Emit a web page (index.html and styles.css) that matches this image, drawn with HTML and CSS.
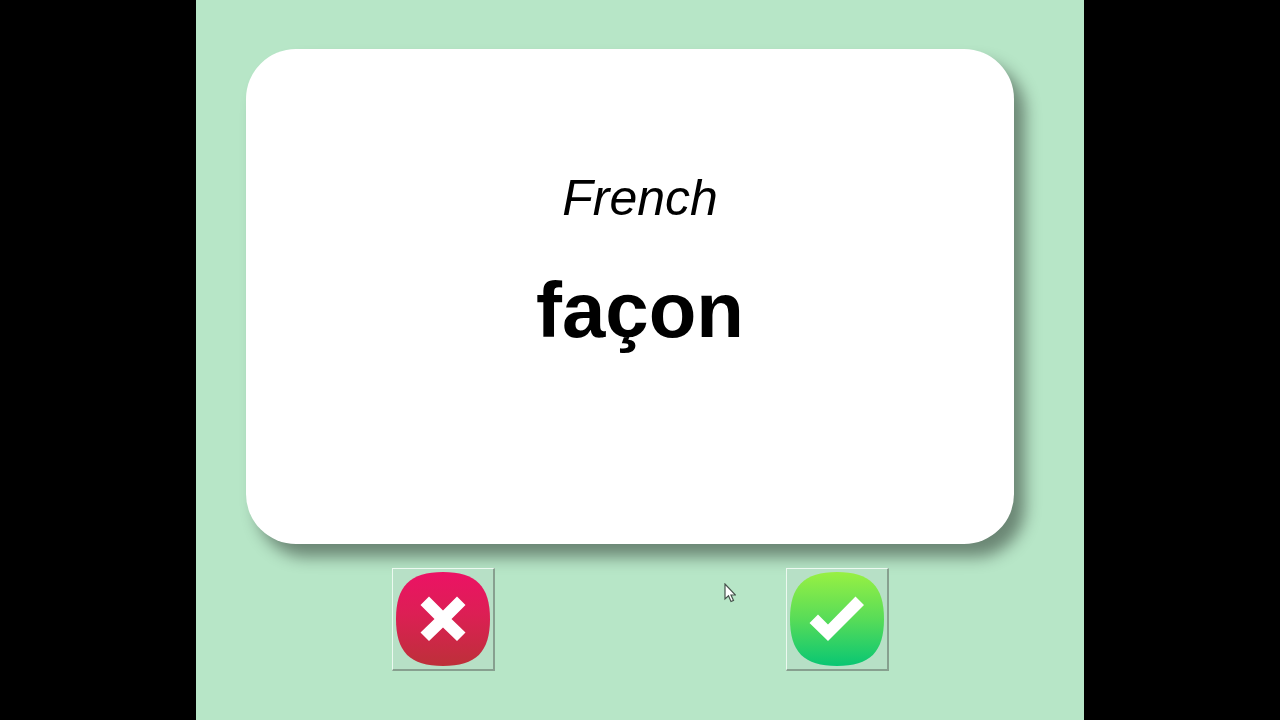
FILE: index.html
```html
<!DOCTYPE html>
<html lang="en">
<head>
<meta charset="UTF-8">
<meta name="viewport" content="width=device-width, initial-scale=1.0">
<title>Flashy</title>
<link rel="stylesheet" href="styles.css">
</head>
<body>

<main class="app">
    <section class="card">
        <p class="language">French</p>
        <h1 class="word" lang="fr">façon</h1>
    </section>

    <div class="answers">
        <button class="answer" type="button" aria-label="Unknown">
            <svg viewBox="0 0 96 96" aria-hidden="true">
                <defs>
                    <linearGradient id="red" x1="0" y1="0" x2="0" y2="1">
                        <stop offset="0" stop-color="#ec1265"/>
                        <stop offset="0.45" stop-color="#dc1f54"/>
                        <stop offset="1" stop-color="#bd3039"/>
                    </linearGradient>
                </defs>
                <path fill="url(#red)" d="M48 1C81 1 95 15 95 48S81 95 48 95S1 81 1 48S15 1 48 1Z"/>
                <path fill="#fff" d="M34 25.500L48 39.500L62 25.500L70.500 34L56.500 48L70.500 61.500L62 70L48 56.500L34 70L25.500 61.500L39.500 48L25.500 34Z"/>
            </svg>
        </button>
        <button class="answer" type="button" aria-label="Known">
            <svg viewBox="0 0 96 96" aria-hidden="true">
                <defs>
                    <linearGradient id="green" x1="0" y1="0" x2="0" y2="1">
                        <stop offset="0" stop-color="#98f043"/>
                        <stop offset="0.5" stop-color="#58dc58"/>
                        <stop offset="1" stop-color="#09c673"/>
                    </linearGradient>
                </defs>
                <path fill="url(#green)" d="M48 1C81 1 95 15 95 48S81 95 48 95S1 81 1 48S15 1 48 1Z"/>
                <path fill="#fff" d="M66.500 25.500L75 34L39 70L20.500 52L29 43.500L39 53.500Z"/>
            </svg>
        </button>
    </div>
</main>

<svg class="pointer" viewBox="0 0 12 20" aria-hidden="true">
    <path d="M1 1V16L4.500 12.800L7 18.500L9.500 17.400L7 12H11.500Z" fill="#fff" stroke="#45534b" stroke-width="1.200"/>
</svg>

</body>
</html>
```

FILE: styles.css
```css
* {
    box-sizing: border-box;
}
body {
    margin: 0;
    background-color: #000;
    font-family: "Liberation Sans", Arial, sans-serif;
}
.app {
    max-width: 888px;
    min-height: 100vh;
    margin: 0 auto;
    padding: 49px 50px;
    background-color: #b7e6c7;
}
.card {
    min-height: 495px;
    margin-right: 20px;
    padding: 119px 0 0 20px;
    background-color: #fff;
    border-radius: 50px;
    box-shadow: 11px 13px 16px rgba(0, 0, 0, 0.42);
    text-align: center;
    color: #000;
}
.language {
    margin: 0;
    font-size: 50px;
    line-height: 60px;
    font-style: italic;
}
.word {
    margin: 38px 0 0;
    font-size: 78px;
    line-height: 88px;
    font-weight: bold;
}
.answers {
    display: grid;
    grid-template-columns: 1fr 1fr;
    justify-items: center;
    margin-top: 24px;
}
.answer {
    padding: 2px;
    background-color: #b7e0c6;
    border-style: solid;
    border-width: 1px 2px 2px 1px;
    border-color: #ecf9f0 #87a08f #87a08f #ecf9f0;
    cursor: pointer;
}
.answer svg {
    display: block;
    width: 96px;
    height: 96px;
}
.answer:active {
    border-color: #87a08f #ecf9f0 #ecf9f0 #87a08f;
}
.pointer {
    position: absolute;
    top: 583px;
    left: 724px;
    width: 12px;
    height: 20px;
    pointer-events: none;
}
```
